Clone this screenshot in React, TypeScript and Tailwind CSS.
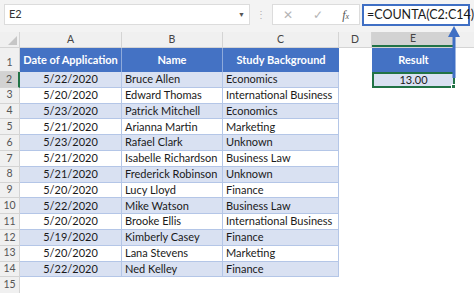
const rows = [
  ['5/22/2020', 'Bruce Allen', 'Economics'],
  ['5/20/2020', 'Edward Thomas', 'International Business'],
  ['5/23/2020', 'Patrick Mitchell', 'Economics'],
  ['5/21/2020', 'Arianna Martin', 'Marketing'],
  ['5/23/2020', 'Rafael Clark', 'Unknown'],
  ['5/21/2020', 'Isabelle Richardson', 'Business Law'],
  ['5/21/2020', 'Frederick Robinson', 'Unknown'],
  ['5/20/2020', 'Lucy Lloyd', 'Finance'],
  ['5/22/2020', 'Mike Watson', 'Business Law'],
  ['5/20/2020', 'Brooke Ellis', 'International Business'],
  ['5/19/2020', 'Kimberly Casey', 'Finance'],
  ['5/20/2020', 'Lana Stevens', 'Marketing'],
  ['5/22/2020', 'Ned Kelley', 'Finance'],
];

const cols = [
  { key: 'A', w: 'w-[102px]' },
  { key: 'B', w: 'w-[101px]' },
  { key: 'C', w: 'w-[116px]' },
  { key: 'D', w: 'w-[33px]' },
  { key: 'E', w: 'w-[83px]' },
];

function FormulaBar() {
  return (
    <div className="flex h-[32px] items-start bg-[#f3f3f3] pt-[4px] pl-[4px]">
      <div className="flex h-[21px] w-[246px] items-center justify-between border border-[#dcdcdc] bg-white pl-[4px] pr-[4px] text-[11px] text-[#333]">
        <span>E2</span>
        <span className="text-[7px] text-[#555]">▼</span>
      </div>
      <div className="flex h-[21px] w-[22px] items-center justify-center text-[10px] text-[#b0b0b0]">⋮</div>
      <div className="flex h-[21px] w-[88px] items-center justify-around border border-[#dcdcdc] bg-white text-[12px] text-[#b5b5b5]">
        <span>✕</span>
        <span>✓</span>
        <span className="font-['Liberation_Serif',serif] text-[12px] italic text-[#555]">
          f<span className="text-[8px]">x</span>
        </span>
      </div>
      <div className="ml-[2px] flex h-[22px] w-[108px] items-center border-2 border-[#3f6fc4] bg-white pl-[3px] text-[12.5px] text-[#1a1a1a]">
        =COUNTA(C2:C14)
      </div>
    </div>
  );
}

export default function App() {
  return (
    <div className="relative h-[293px] w-[474px] overflow-hidden bg-white font-['Lato',sans-serif] text-[11px] text-[#1a1a1a]">
      <FormulaBar />
      {/* column headers */}
      <div className="flex h-[16px] border-b border-[#d4d4d4] bg-[#f0f0f0] text-[10.5px] text-[#444]">
        <div className="relative w-[20px] border-r border-[#d4d4d4]">
          <div className="absolute right-[2px] bottom-[2px] h-0 w-0 border-b-[9px] border-l-[9px] border-b-[#c6c6c6] border-l-transparent" />
        </div>
        {cols.map((c) => (
          <div
            key={c.key}
            className={`${c.w} flex items-center justify-center border-r border-[#d4d4d4] ${
              c.key === 'E' ? 'border-b-2 border-b-[#217346] bg-[#d2d2d2]' : ''
            }`}
          >
            {c.key}
          </div>
        ))}
        <div className="flex-1" />
      </div>
      {/* header row 1 */}
      <div className="flex h-[24px]">
        <div className="flex w-[20px] items-center justify-center border-r border-b border-[#d4d4d4] bg-[#f0f0f0] pt-[6px] text-[10.5px] text-[#555]">
          1
        </div>
        <div className="flex w-[102px] items-center justify-center border-r border-[#8eaadb] bg-[#4472c4] font-bold text-white">
          Date of Application
        </div>
        <div className="flex w-[101px] items-center justify-center border-r border-[#8eaadb] bg-[#4472c4] font-bold text-white">
          Name
        </div>
        <div className="flex w-[116px] items-center justify-center bg-[#4472c4] font-bold text-white">
          Study Background
        </div>
        <div className="w-[33px]" />
        <div className="flex w-[83px] items-center justify-center bg-[#4472c4] font-bold text-white">Result</div>
      </div>
      {rows.map((r, i) => {
        const shade = i % 2 === 0 ? 'bg-[#d9e1f2]' : 'bg-white';
        return (
          <div key={i} className="flex h-[15.8px]">
            <div
              className={`flex w-[20px] items-center justify-center border-b border-[#d4d4d4] text-[10.5px] text-[#555] ${
                i === 0 ? 'border-r-2 border-r-[#217346] bg-[#d2d2d2]' : 'border-r bg-[#f0f0f0]'
              }`}
            >
              {i + 2}
            </div>
            <div className={`flex w-[102px] items-center justify-center border-r border-b border-[#b4c6e7] ${shade}`}>
              {r[0]}
            </div>
            <div className={`flex w-[101px] items-center border-r border-b border-[#b4c6e7] pl-[3px] ${shade}`}>
              {r[1]}
            </div>
            <div className={`flex w-[116px] items-center border-r border-b border-[#b4c6e7] pl-[3px] ${shade}`}>
              {r[2]}
            </div>
            <div className="w-[33px]" />
            {i === 0 ? (
              <div className="relative flex w-[83px] items-center justify-center border-2 border-[#217346] bg-[#d9e1f2]">
                13.00
                <div className="absolute -right-[3px] -bottom-[3px] h-[5px] w-[5px] border border-white bg-[#217346]" />
              </div>
            ) : (
              <div className="w-[83px]" />
            )}
          </div>
        );
      })}
      <div className="flex h-[16px]">
        <div className="flex w-[20px] items-center justify-center border-r border-[#d4d4d4] bg-[#f0f0f0] text-[10.5px] text-[#555]">
          15
        </div>
      </div>
      {/* arrow from result to formula */}
      <svg className="absolute left-[446px] top-[26px]" width="16" height="52" viewBox="0 0 16 52">
        <path d="M8 0 L14 11 L2 11 Z" fill="#3f6fc4" />
        <rect x="6.5" y="10" width="3" height="42" fill="#3f6fc4" />
      </svg>
    </div>
  );
}
